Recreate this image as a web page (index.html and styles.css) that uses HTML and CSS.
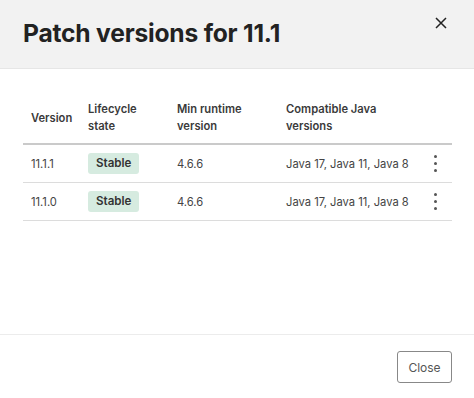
FILE: index.html
```html
<!DOCTYPE html>
<html lang="en">
<head>
  <meta charset="UTF-8">
  <title>Patch versions for 11.1</title>
  <link rel="stylesheet" href="styles.css">
</head>
<body>
  <div class="modal">
    <!-- Шапка -->
    <div class="modal-header">
      <h1 class="modal-title">Patch versions for 11.1</h1>
      <button class="icon-close" aria-label="Close">
        <svg width="12" height="12" viewBox="0 0 12 12"><path d="M1 1L11 11M11 1L1 11" stroke="#222" stroke-width="1.5" fill="none"/></svg>
      </button>
    </div>
    <!-- Таблица версий -->
    <div class="modal-body">
      <table class="versions">
        <thead>
          <tr>
            <th class="col-version">Version</th>
            <th class="col-state">Lifecycle<br>state</th>
            <th class="col-runtime">Min runtime<br>version</th>
            <th class="col-java">Compatible Java<br>versions</th>
            <th class="col-menu"></th>
          </tr>
        </thead>
        <tbody>
          <tr>
            <td>11.1.1</td>
            <td><span class="badge">Stable</span></td>
            <td>4.6.6</td>
            <td>Java 17, Java 11, Java 8</td>
            <td class="kebab"><span></span><span></span><span></span></td>
          </tr>
          <tr>
            <td>11.1.0</td>
            <td><span class="badge">Stable</span></td>
            <td>4.6.6</td>
            <td>Java 17, Java 11, Java 8</td>
            <td class="kebab"><span></span><span></span><span></span></td>
          </tr>
        </tbody>
      </table>
    </div>
    <!-- Подвал -->
    <div class="modal-footer">
      <button class="btn">Close</button>
    </div>
  </div>
</body>
</html>
```

FILE: styles.css
```css
* {
  box-sizing: border-box;
  margin: 0;
  padding: 0;
}
body {
  font-family: Inter, "Noto Sans", sans-serif;
  background-color: #fff;
  color: #333;
}
.modal {
  width: 474px;
  height: 398px;
  display: flex;
  flex-direction: column;
}
.modal-header {
  height: 69px;
  background-color: #f2f2f2;
  border-bottom: 1px solid #e6e6e6;
  display: flex;
  justify-content: space-between;
  padding: 0 22px 0 23px;
}
.modal-title {
  font-size: 24.6px;
  font-weight: 700;
  color: #222;
  letter-spacing: -0.2px;
  margin-top: 18px;
}
.icon-close {
  background: none;
  border: none;
  width: 20px;
  height: 20px;
  margin-top: 13px;
  margin-right: 1px;
  display: flex;
  align-items: center;
  justify-content: center;
}
.modal-body {
  flex: 1;
  padding: 24px 22px 0 23px;
  border-bottom: 1px solid #ececec;
}
.versions {
  width: 100%;
  table-layout: fixed;
  border-collapse: collapse;
}
.versions th {
  text-align: left;
  font-size: 11.2px;
  font-weight: 600;
  color: #3a3a3a;
  line-height: 17px;
  padding: 8px;
  vertical-align: middle;
  border-bottom: 2px solid #cacaca;
}
.versions td {
  font-size: 11.2px;
  color: #444;
  padding: 8px;
  height: 38px;
  white-space: nowrap;
  border-bottom: 1px solid #dcdcdc;
  vertical-align: middle;
}
.col-version { width: 57px; }
.col-state { width: 89px; }
.col-runtime { width: 109px; }
.col-java { width: 141px; }
.badge {
  display: inline-block;
  background-color: #d6ebe0;
  color: #333;
  font-weight: 600;
  font-size: 11.6px;
  line-height: 21px;
  padding: 0 8px;
  border-radius: 3px;
}
.kebab {
  text-align: center;
}
.kebab span {
  display: block;
  width: 3px;
  height: 3px;
  border-radius: 50%;
  background-color: #555;
  margin: 0 auto 4px;
}
.kebab span:last-child {
  margin-bottom: 0;
}
.modal-footer {
  height: 63px;
  display: flex;
  justify-content: flex-end;
  align-items: flex-start;
  padding: 16px 22px 0 0;
}
.btn {
  font-family: inherit;
  font-size: 12px;
  color: #555;
  background-color: #fff;
  border: 1px solid #888;
  border-radius: 3px;
  width: 55px;
  height: 32px;
}
```
